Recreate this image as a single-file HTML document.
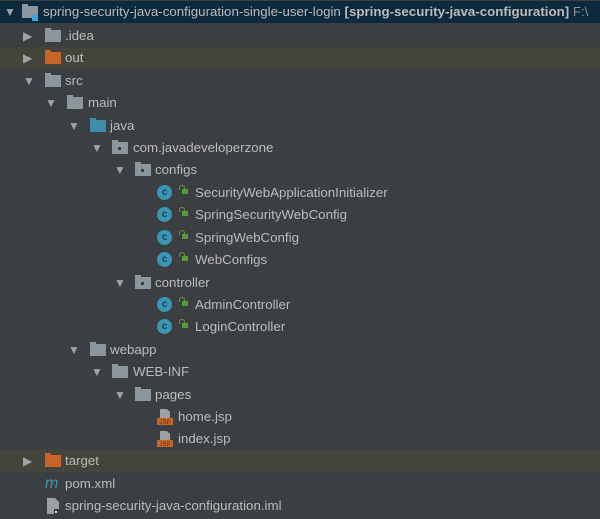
<!DOCTYPE html>
<html><head><style>
body{margin:0;width:600px;height:519px;background:#3c3f41;overflow:hidden;font-family:"Liberation Sans",sans-serif;font-size:13.3px;color:#bbbbbb;position:relative}
.r{position:absolute;left:0;width:600px;height:22px;line-height:22px;white-space:nowrap}
.sel{background:#0d293e}
.ex{background:#45443a}
.t{position:absolute;top:0}
.ar{position:absolute;top:0;font-size:12px;color:#a0a3a6}
.fd{position:absolute;top:5px;width:16px;height:12px}
.fd:before{content:"";position:absolute;left:0;top:-2px;width:6px;height:3px;background:inherit}
.g{background:#8c969d}.o{background:#c8642a}.b{background:#3e8dab}
.dot:after{content:"";position:absolute;left:6px;top:5px;width:3px;height:3px;background:#3c3f41}
.c{position:absolute;top:3px;width:15px;height:15px;border-radius:50%;background:#3a95b5;color:#1f3f4e;font-size:10px;font-weight:bold;line-height:15px;text-align:center}
.lk{position:absolute;top:7px;width:6px;height:5px;background:#5a9a3a}
.lk:before{content:"";position:absolute;left:-3px;top:-4px;width:4px;height:4px;border:1.5px solid #5a9a3a;border-bottom:none;border-radius:3px 3px 0 0}
.jsp{position:absolute;top:2px;width:16px;height:18px}
</style></head><body>
<div class="r sel" style="top:1px"><span class="ar" style="left:4px">▼</span><div class="fd g" style="left:22px"></div><div style="position:absolute;left:32px;top:14px;width:6px;height:6px;background:#3ba4e0"></div><span class="t" style="left:43px">spring-security-java-configuration-single-user-login <b>[spring-security-java-configuration]</b> <span style="color:#8c8c8c">F:\</span></span></div>
<div class="r" style="top:25px"><span class="ar" style="left:23px">▶</span><div class="fd g" style="left:45px"></div><span class="t" style="left:65px">.idea</span></div>
<div class="r ex" style="top:47px"><span class="ar" style="left:23px">▶</span><div class="fd o" style="left:45px"></div><span class="t" style="left:65px">out</span></div>
<div class="r" style="top:70px"><span class="ar" style="left:23px">▼</span><div class="fd g" style="left:45px"></div><span class="t" style="left:65px">src</span></div>
<div class="r" style="top:92px"><span class="ar" style="left:45px">▼</span><div class="fd g" style="left:67px"></div><span class="t" style="left:88px">main</span></div>
<div class="r" style="top:115px"><span class="ar" style="left:68px">▼</span><div class="fd b" style="left:90px"></div><span class="t" style="left:110px">java</span></div>
<div class="r" style="top:137px"><span class="ar" style="left:91px">▼</span><div class="fd g dot" style="left:112px"></div><span class="t" style="left:133px">com.javadeveloperzone</span></div>
<div class="r" style="top:159px"><span class="ar" style="left:114px">▼</span><div class="fd g dot" style="left:135px"></div><span class="t" style="left:155px">configs</span></div>
<div class="r" style="top:182px"><div class="c" style="left:157px">c</div><div class="lk" style="left:182px"></div><span class="t" style="left:195px">SecurityWebApplicationInitializer</span></div>
<div class="r" style="top:204px"><div class="c" style="left:157px">c</div><div class="lk" style="left:182px"></div><span class="t" style="left:195px">SpringSecurityWebConfig</span></div>
<div class="r" style="top:227px"><div class="c" style="left:157px">c</div><div class="lk" style="left:182px"></div><span class="t" style="left:195px">SpringWebConfig</span></div>
<div class="r" style="top:249px"><div class="c" style="left:157px">c</div><div class="lk" style="left:182px"></div><span class="t" style="left:195px">WebConfigs</span></div>
<div class="r" style="top:272px"><span class="ar" style="left:114px">▼</span><div class="fd g dot" style="left:135px"></div><span class="t" style="left:155px">controller</span></div>
<div class="r" style="top:294px"><div class="c" style="left:157px">c</div><div class="lk" style="left:182px"></div><span class="t" style="left:195px">AdminController</span></div>
<div class="r" style="top:316px"><div class="c" style="left:157px">c</div><div class="lk" style="left:182px"></div><span class="t" style="left:195px">LoginController</span></div>
<div class="r" style="top:339px"><span class="ar" style="left:68px">▼</span><div class="fd g" style="left:90px"></div><span class="t" style="left:110px">webapp</span></div>
<div class="r" style="top:361px"><span class="ar" style="left:91px">▼</span><div class="fd g" style="left:112px"></div><span class="t" style="left:133px">WEB-INF</span></div>
<div class="r" style="top:384px"><span class="ar" style="left:114px">▼</span><div class="fd g" style="left:135px"></div><span class="t" style="left:155px">pages</span></div>
<div class="r" style="top:406px"><svg class="jsp" style="left:157px" viewBox="0 0 16 18"><path d="M3 1h7l3 3v7H3z" fill="#9aa0a4"/><rect x="0" y="10" width="16" height="7" fill="#c8642a"/><text x="8" y="16" font-size="6" fill="#3c3f41" text-anchor="middle" font-family="Liberation Sans">JSP</text></svg><span class="t" style="left:178px">home.jsp</span></div>
<div class="r" style="top:428px"><svg class="jsp" style="left:157px" viewBox="0 0 16 18"><path d="M3 1h7l3 3v7H3z" fill="#9aa0a4"/><rect x="0" y="10" width="16" height="7" fill="#c8642a"/><text x="8" y="16" font-size="6" fill="#3c3f41" text-anchor="middle" font-family="Liberation Sans">JSP</text></svg><span class="t" style="left:178px">index.jsp</span></div>
<div class="r ex" style="top:450px"><span class="ar" style="left:23px">▶</span><div class="fd o" style="left:45px"></div><span class="t" style="left:65px">target</span></div>
<div class="r" style="top:473px"><span class="t" style="left:45px;color:#3a95b5;font-style:italic;font-size:16px">m</span><span class="t" style="left:65px">pom.xml</span></div>
<div class="r" style="top:495px"><svg style="position:absolute;left:46px;top:3px" width="14" height="16" viewBox="0 0 14 16"><path d="M1 0h8l4 4v12H1z" fill="#9aa0a4"/><rect x="8" y="11" width="5" height="5" fill="#3c3f41"/><rect x="9" y="13" width="2" height="2" fill="#ddd"/></svg><span class="t" style="left:65px">spring-security-java-configuration.iml</span></div>
</body></html>
